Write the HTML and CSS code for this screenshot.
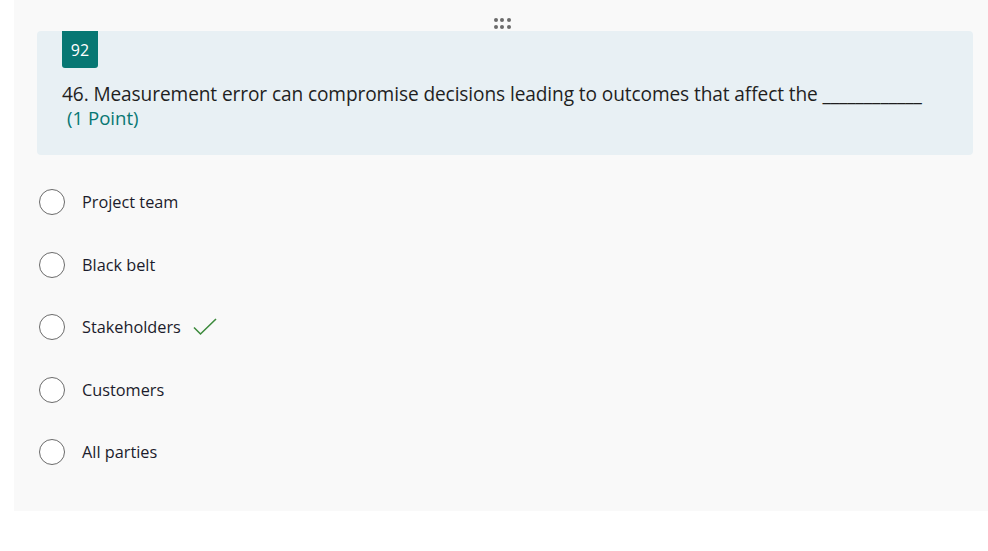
FILE: index.html
```html
<!DOCTYPE html>
<html>
<head>
<meta charset="utf-8">
<link rel="stylesheet" href="styles.css">
</head>
<body>
<div class="card">
  <div class="handle">
    <span></span><span></span><span></span><span></span><span></span><span></span>
  </div>
  <div class="qbox">
    <div class="badge">92</div>
    <div class="qtext">46. Measurement error can compromise decisions leading to outcomes that affect the ____________</div>
    <div class="points">(1 Point)</div>
  </div>
  <ul class="options">
    <li class="opt"><span class="radio"></span><span class="label">Project team</span></li>
    <li class="opt"><span class="radio"></span><span class="label">Black belt</span></li>
    <li class="opt"><span class="radio"></span><span class="label">Stakeholders</span>
      <svg class="check" width="26" height="20" viewBox="0 0 26 20"><path d="M2 10.5 L8.5 17 L24 2" fill="none" stroke="#3c8a3c" stroke-width="1.6"/></svg>
    </li>
    <li class="opt"><span class="radio"></span><span class="label">Customers</span></li>
    <li class="opt"><span class="radio"></span><span class="label">All parties</span></li>
  </ul>
</div>
</body>
</html>
```
FILE: styles.css
```css
html, body {
  margin: 0;
  padding: 0;
  background: #ffffff;
}
body {
  font-family: "Open Sans", "Noto Sans", sans-serif;
  color: #242424;
}
.card {
  margin-left: 14px;
  width: 974px;
  height: 511px;
  background: #f9f9f9;
  box-sizing: border-box;
  padding: 0 15px 0 23px;
  display: flex;
  flex-direction: column;
}
.handle {
  align-self: center;
  margin: 18px 0 0 -6px;
  display: grid;
  grid-template-columns: repeat(3, 4px);
  grid-auto-rows: 4px;
  gap: 3px 2.5px;
  height: 11px;
}
.handle span {
  width: 4px;
  height: 4px;
  border-radius: 50%;
  background: #6b6b6b;
}
.qbox {
  margin-top: 2px;
  background: #e8f0f4;
  border-radius: 4px;
  height: 124px;
  box-sizing: border-box;
  padding: 0 25px;
}
.badge {
  width: 36px;
  height: 37px;
  background: #077773;
  color: #fff;
  border-radius: 0 0 3px 3px;
  font-size: 16px;
  display: flex;
  align-items: center;
  justify-content: center;
}
.qtext {
  margin-top: 13px;
  font-size: 19.1px;
  line-height: 26px;
  color: #1f1f1f;
  letter-spacing: -0.1px;
  white-space: nowrap;
}
.points {
  margin-left: 5px;
  font-size: 18.6px;
  line-height: 22px;
  color: #077773;
}
.options {
  list-style: none;
  margin: 34px 0 0 0;
  padding: 0;
  display: flex;
  flex-direction: column;
  gap: 36.5px;
}
.opt {
  display: flex;
  align-items: center;
  height: 26px;
}
.radio {
  width: 26px;
  height: 26px;
  box-sizing: border-box;
  border: 1.5px solid #6b6b6b;
  border-radius: 50%;
  background: #fff;
  margin-left: 2px;
}
.label {
  margin-left: 17px;
  font-size: 16.3px;
  color: #1c1c2c;
}
.check {
  margin-left: 11px;
}
```
